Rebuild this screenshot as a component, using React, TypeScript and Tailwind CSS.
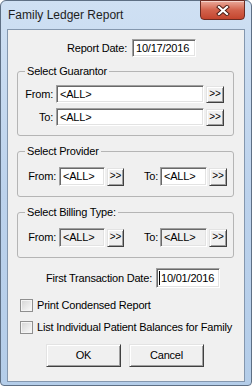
import React from 'react';

const FONT = { fontFamily: '"Liberation Sans", Arial, sans-serif' };

const sunken =
  'border border-t-[#a0a0a0] border-l-[#a0a0a0] border-b-[#ffffff] border-r-[#ffffff] shadow-[inset_1px_1px_0_#696969,inset_-1px_-1px_0_#e3e3e3]';

function TextBox({ value, width, height, disabled, caret }: { value: string; width: string; height: string; disabled?: boolean; caret?: boolean }) {
  return (
    <div
      className={`${width} ${height} flex items-center pl-[3px] ${sunken} ${disabled ? 'bg-[#f0f0f0]' : 'bg-white'}`}
    >
      {caret && <span className="w-px h-[14px] bg-black mr-[1px] -ml-[1px]" />}
      <span className="leading-none">{value}</span>
    </div>
  );
}

function PickButton({ width, height }: { width: string; height: string }) {
  return (
    <button
      type="button"
      className={`${width} ${height} flex items-center justify-center bg-[#f0f0f0] border border-t-[#e3e3e3] border-l-[#e3e3e3] border-b-[#404040] border-r-[#404040] shadow-[inset_1px_1px_0_#ffffff,inset_-1px_-1px_0_#a0a0a0] text-[10px] leading-none pb-[1px]`}
    >
      &gt;&gt;
    </button>
  );
}

function PushButton({ label }: { label: string }) {
  return (
    <button
      type="button"
      className="w-[75px] h-[23px] flex items-center justify-center bg-[#f0f0f0] border border-t-[#e3e3e3] border-l-[#e3e3e3] border-b-[#404040] border-r-[#404040] shadow-[inset_1px_1px_0_#ffffff,inset_-1px_-1px_0_#a0a0a0]"
    >
      {label}
    </button>
  );
}

function Group({ title, children, pt, pb }: { title: string; children: React.ReactNode; pt: string; pb: string }) {
  return (
    <fieldset className={`ml-[9px] w-[217px] border border-[#b5b5b5] rounded-[3px] ${pt} ${pb}`}>
      <legend className="ml-[7px] px-[2px] leading-[12px]">{title}</legend>
      {children}
    </fieldset>
  );
}

function RangeRow({ disabled }: { disabled?: boolean }) {
  return (
    <div className="flex items-center">
      <span className="w-[38px] text-right">From:</span>
      <div className="ml-[3px]">
        <TextBox value="<ALL>" width="w-[46px]" height="h-[19px]" disabled={disabled} />
      </div>
      <div className="ml-[2px]">
        <PickButton width="w-[17px]" height="h-[18px]" />
      </div>
      <span className="w-[34px] text-right">To:</span>
      <div className="ml-[2px]">
        <TextBox value="<ALL>" width="w-[47px]" height="h-[19px]" disabled={disabled} />
      </div>
      <div className="ml-[2px]">
        <PickButton width="w-[18px]" height="h-[18px]" />
      </div>
    </div>
  );
}

function CheckRow({ label, mt }: { label: string; mt: string }) {
  return (
    <div className={`flex items-center ${mt} ml-[12px] h-[13px]`}>
      <span className="w-[13px] h-[13px] border border-[#8f8f8f] bg-gradient-to-br from-[#d4d4d4] to-[#fbfbfb] shadow-[inset_0_0_0_1px_#f4f4f4]" />
      <span className="ml-[4px] leading-[13px]">{label}</span>
    </div>
  );
}

export default function App() {
  return (
    <div className="w-[252px] h-[386px] bg-white text-[11px] text-black tracking-[-0.2px]" style={FONT}>
      <div className="w-[252px] h-[386px] flex flex-col border border-[#5e6f84] rounded-t-[6px] rounded-b-[4px] bg-gradient-to-b from-[#cfe0f3] via-[#bcd2ec] to-[#b4cde9]">
        {/* Title bar */}
        <div className="h-[28px] flex items-start">
          <span className="pl-[7px] pt-[7px] text-[12px] leading-[14px] tracking-normal text-[#1e1e1e]">
            Family Ledger Report
          </span>
          <div className="ml-auto mr-[6px] -mt-px w-[45px] h-[20px] rounded-b-[4px] border border-[#6d2b22] bg-gradient-to-b from-[#e9a99b] via-[#d2624c] to-[#c4452e] shadow-[inset_0_1px_0_rgba(255,255,255,0.5)] flex items-center justify-center">
            <svg width="14" height="11" viewBox="0 0 14 11">
              <path d="M3 2 L11 9 M11 2 L3 9" stroke="#4a1a12" strokeWidth="4" strokeLinecap="square" />
              <path d="M3 2 L11 9 M11 2 L3 9" stroke="#ffffff" strokeWidth="2.2" strokeLinecap="square" />
            </svg>
          </div>
        </div>

        {/* Client area */}
        <div className="mx-[6px] h-[353px] border border-[#8497ae] bg-[#f0f0f0] flex flex-col">
          <div className="flex items-center mt-[9px]">
            <span className="w-[119px] text-right">Report Date:</span>
            <div className="ml-[5px]">
              <TextBox value="10/17/2016" width="w-[64px]" height="h-[18px]" />
            </div>
          </div>

          <div className="mt-[8px]">
            <Group title="Select Guarantor" pt="pt-[8px]" pb="pb-[9px]">
              <div className="flex items-center">
                <span className="w-[35px] text-right">From:</span>
                <div className="ml-[3px]">
                  <TextBox value="<ALL>" width="w-[148px]" height="h-[18px]" />
                </div>
                <div className="ml-[2px]">
                  <PickButton width="w-[18px]" height="h-[17px]" />
                </div>
              </div>
              <div className="flex items-center mt-[5px]">
                <span className="w-[35px] text-right">To:</span>
                <div className="ml-[3px]">
                  <TextBox value="<ALL>" width="w-[148px]" height="h-[18px]" />
                </div>
                <div className="ml-[2px]">
                  <PickButton width="w-[18px]" height="h-[17px]" />
                </div>
              </div>
            </Group>
          </div>

          <div className="mt-[9px]">
            <Group title="Select Provider" pt="pt-[10px]" pb="pb-[10px]">
              <RangeRow />
            </Group>
          </div>

          <div className="mt-[9px]">
            <Group title="Select Billing Type:" pt="pt-[10px]" pb="pb-[10px]">
              <RangeRow disabled />
            </Group>
          </div>

          <div className="flex items-center mt-[10px]">
            <span className="w-[144px] text-right">First Transaction Date:</span>
            <div className="ml-[4px]">
              <TextBox value="10/01/2016" width="w-[64px]" height="h-[20px]" caret />
            </div>
          </div>

          <CheckRow label="Print Condensed Report" mt="mt-[11px]" />
          <CheckRow label="List Individual Patient Balances for Family" mt="mt-[9px]" />

          <div className="flex mt-[10px] ml-[38px]">
            <PushButton label="OK" />
            <div className="ml-[8px]">
              <PushButton label="Cancel" />
            </div>
          </div>
        </div>
      </div>
    </div>
  );
}
